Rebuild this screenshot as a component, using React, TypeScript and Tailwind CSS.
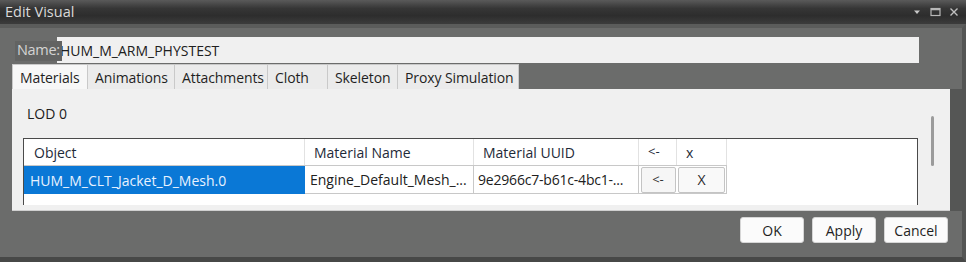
import React from "react";

const font = { fontFamily: '"Open Sans", "Noto Sans", "Liberation Sans", sans-serif' };

function Tab({ label, w, active }: { label: string; w: number; active?: boolean }) {
  return (
    <div
      style={{ width: w }}
      className={
        "h-[25px] flex items-center pl-[7px] text-[14px] tracking-[-0.1px] text-[#1f1f1f] border-t border-r border-[#c9c9c9] " +
        (active ? "bg-[#f7f7f7] border-l" : "bg-[#ebebeb]")
      }
    >
      {label}
    </div>
  );
}

export default function App() {
  return (
    <div style={font} className="w-[966px] h-[262px] flex flex-col bg-[#6b6c6b] overflow-hidden">
      {/* Title bar */}
      <div className="h-[24px] shrink-0 flex items-center justify-between bg-[linear-gradient(to_bottom,#5a5a5a,#363636_35%,#2d2d2d_65%,#3c3c3c)]">
        <span className="pl-[5px] text-[14.5px] text-[#dadada]">Edit Visual</span>
        <div className="flex items-center gap-[8px] pr-[7px]">
          <svg width="10" height="10" viewBox="0 0 10 10">
            <path d="M2 3.5 L8 3.5 L5 7 Z" fill="#c8c8c8" />
          </svg>
          <svg width="11" height="10" viewBox="0 0 11 10">
            <rect x="1" y="1.5" width="9" height="7" fill="none" stroke="#b8b8b8" strokeWidth="1.2" />
            <line x1="1" y1="2.5" x2="10" y2="2.5" stroke="#b8b8b8" strokeWidth="1.5" />
          </svg>
          <svg width="10" height="10" viewBox="0 0 10 10">
            <path d="M1.5 1.5 L8.5 8.5 M8.5 1.5 L1.5 8.5" stroke="#c0c0c0" strokeWidth="1.4" />
          </svg>
        </div>
      </div>

      {/* Body */}
      <div className="flex-1 flex flex-col border-t-[4px] border-[#5b5c5b] border-r-[4px] border-r-[#545554] border-b-[5px] border-b-[#474847]">
        {/* Name row */}
        <div className="flex items-center mt-[9px] h-[26px]">
          <div className="ml-[15px] w-[42px] h-[26px] flex items-center whitespace-nowrap relative z-10">
            <span className="pl-[2px] pr-[2px] mt-[2px] h-[20px] leading-[18px] bg-[#626362] text-[14.5px] tracking-[-0.3px] text-[#d4d4d4]">
              Name:
            </span>
          </div>
          <div className="w-[862px] h-[26px] bg-[#f0f0f0] flex items-center pl-[3px] text-[14px] text-[#202020]">
            HUM_M_ARM_PHYSTEST
          </div>
        </div>

        {/* Tabs */}
        <div className="flex mt-[1px] ml-[12px]">
          <Tab label="Materials" w={76} active />
          <Tab label="Animations" w={87} />
          <Tab label="Attachments" w={93} />
          <Tab label="Cloth" w={60} />
          <Tab label="Skeleton" w={70} />
          <Tab label="Proxy Simulation" w={121} />
        </div>

        {/* Panel row */}
        <div className="flex">
          <div className="ml-[12px] w-[938px] h-[122px] bg-[#f0f0f0] border-b border-[#d0d0d0] relative overflow-hidden">
            <div className="absolute right-[16px] top-[27px] w-[3px] h-[50px] rounded-full bg-[#9b9b9b]" />
            <div className="h-[116px] overflow-hidden">
              <div className="pl-[15px] pt-[14px] h-[49px] text-[14px] text-[#202020]">LOD 0</div>
              <div className="ml-[11px] w-[895px] h-[80px] bg-white border-t border-l border-r border-[#4a4a4a]">
                {/* Header */}
                <div className="flex h-[26px] text-[14px] text-[#1e2a38]">
                  <div className="w-[281px] pl-[10px] flex items-center border-r border-[#e2e2e2]">Object</div>
                  <div className="w-[169px] pl-[9px] flex items-center border-r border-[#e2e2e2]">Material Name</div>
                  <div className="w-[165px] pl-[9px] flex items-center border-r border-[#e2e2e2]">Material UUID</div>
                  <div className="w-[38px] pl-[9px] flex items-center border-r border-[#e2e2e2] text-[13px]">&lt;-</div>
                  <div className="w-[50px] pl-[9px] flex items-center border-r border-[#e2e2e2]">x</div>
                </div>
                {/* Row */}
                <div className="flex h-[29px] text-[14px]">
                  <div className="w-[281px] pl-[6px] flex items-center bg-[#0a78d6] text-[#e8f2ff] border-t border-[#c8c8c8] whitespace-nowrap">
                    HUM_M_CLT_Jacket_D_Mesh.0
                  </div>
                  <div className="w-[169px] pl-[5px] flex items-center text-[#202020] border border-l-0 border-[#c8c8c8] whitespace-nowrap overflow-hidden">
                    Engine_Default_Mesh_...
                  </div>
                  <div className="w-[165px] pl-[4px] flex items-center text-[#202020] border border-l-0 border-[#c8c8c8] whitespace-nowrap overflow-hidden tracking-[-0.2px]">
                    9e2966c7-b61c-4bc1-...
                  </div>
                  <div className="w-[38px] flex items-center justify-center border-b border-[#c8c8c8] border-t">
                    <div className="w-[35px] h-[26px] rounded-[2px] border border-[#c4c4c4] bg-[#f6f6f6] flex items-center justify-center text-[13px] text-[#333]">
                      &lt;-
                    </div>
                  </div>
                  <div className="w-[50px] flex items-center justify-center border-b border-r border-t border-[#c8c8c8]">
                    <div className="w-[47px] h-[26px] rounded-[2px] border border-[#c4c4c4] bg-[#f9f9f9] flex items-center justify-center text-[14px] text-[#2a2a2a]">
                      X
                    </div>
                  </div>
                </div>
              </div>
            </div>
          </div>
          <div className="w-[12px] bg-[#555655]" />
        </div>

        {/* Buttons */}
        <div className="flex justify-end gap-[8px] mt-[6px] mr-[14px]">
          {["OK", "Apply", "Cancel"].map((b) => (
            <div
              key={b}
              className="w-[64px] h-[26px] rounded-[3px] bg-[#fbfbfb] border border-[#d6d6d6] flex items-center justify-center text-[14px] text-[#1f1f1f]"
            >
              {b}
            </div>
          ))}
        </div>
      </div>
    </div>
  );
}
